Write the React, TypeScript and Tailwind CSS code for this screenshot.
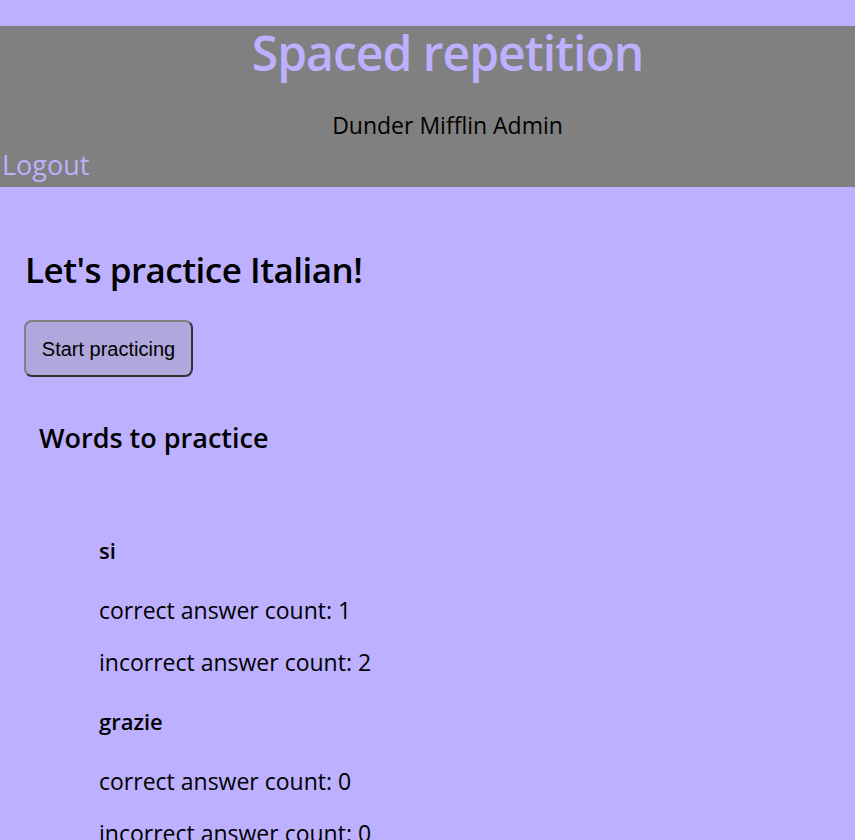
export default function App() {
  const words = [
    { w: "si", c: 1, i: 2 },
    { w: "grazie", c: 0, i: 0 },
  ];
  return (
    <div className="min-h-[840px] bg-[#bcb0ff] pt-[26px] font-['Open_Sans',sans-serif] text-black">
      <header className="bg-[#808080] pt-[3px] pb-[9px]">
        <div className="pl-[40px]">
          <h1 className="text-center text-[48px] font-semibold leading-none tracking-[-1px] text-[#bcb0ff]">Spaced repetition</h1>
          <p className="mt-[37px] text-center text-[23px] leading-none">Dunder Mifflin Admin</p>
        </div>
        <a className="mt-[14px] block pl-[2px] text-[27px] leading-none text-[#bcb0ff]">Logout</a>
      </header>
      <main className="px-[25px]">
        <h2 className="mt-[65px] text-[35px] font-semibold leading-none tracking-[-0.5px]">Let's practice Italian!</h2>
        <button
          className="mt-[33px] -ml-px h-[57px] w-[169px] rounded-[8px] border-2 border-t-[#808080] border-l-[#808080] border-r-[#333] border-b-[#333] bg-[#b0a7dc] text-[20px] text-black"
          style={{ fontFamily: '"Liberation Sans", Arial, sans-serif' }}
        >
          Start practicing
        </button>
        <h3 className="mt-[47px] ml-[14px] text-[27px] font-semibold leading-none">Words to practice</h3>
        <ul className="mt-[88px] ml-[74px]">
          {words.map((x) => (
            <li key={x.w} className="mb-[36px]">
              <h4 className="text-[22px] font-semibold leading-none">{x.w}</h4>
              <p className="mt-[38px] text-[23px] leading-none">correct answer count: {x.c}</p>
              <p className="mt-[29px] text-[23px] leading-none">incorrect answer count: {x.i}</p>
            </li>
          ))}
        </ul>
      </main>
    </div>
  );
}
